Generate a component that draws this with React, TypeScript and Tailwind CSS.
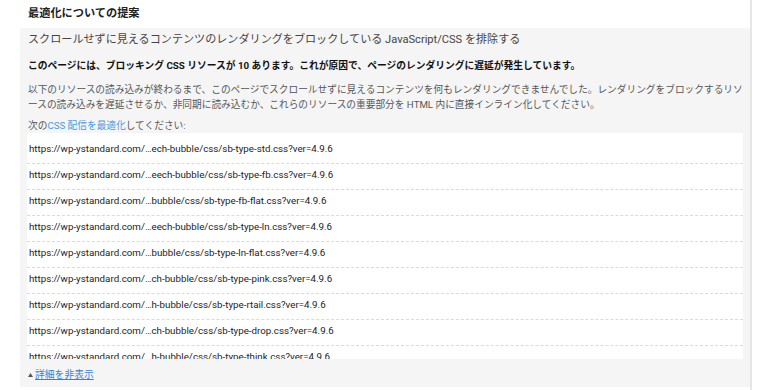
const resources = [
  "https://wp-ystandard.com/…ech-bubble/css/sb-type-std.css?ver=4.9.6",
  "https://wp-ystandard.com/…eech-bubble/css/sb-type-fb.css?ver=4.9.6",
  "https://wp-ystandard.com/…bubble/css/sb-type-fb-flat.css?ver=4.9.6",
  "https://wp-ystandard.com/…eech-bubble/css/sb-type-ln.css?ver=4.9.6",
  "https://wp-ystandard.com/…bubble/css/sb-type-ln-flat.css?ver=4.9.6",
  "https://wp-ystandard.com/…ch-bubble/css/sb-type-pink.css?ver=4.9.6",
  "https://wp-ystandard.com/…h-bubble/css/sb-type-rtail.css?ver=4.9.6",
  "https://wp-ystandard.com/…ch-bubble/css/sb-type-drop.css?ver=4.9.6",
  "https://wp-ystandard.com/…h-bubble/css/sb-type-think.css?ver=4.9.6",
];

const App = () => {
  return (
    <div className="flex h-[390px] w-[768px] overflow-hidden bg-white font-['Roboto','Noto_Sans_CJK_JP',sans-serif]">
      <div className="w-[750px] shrink-0 pl-[20px]">
        <h3 className="flex h-[28px] items-center pl-[8px] text-[11.2px] font-bold text-[#212121]">
          最適化についての提案
        </h3>

        <div className="flex h-[359px] flex-col bg-[#f5f5f5] pl-[8px] pr-[7px] pt-[4px]">
          <p className="text-[11.1px] leading-[16px] text-[#444]">
            スクロールせずに見えるコンテンツのレンダリングをブロックしている JavaScript/CSS を排除する
          </p>

          <p className="mt-[11px] text-[9.75px] font-bold leading-[14px] text-[#111]">
            このページには、ブロッキング CSS リソースが 10 あります。これが原因で、ページのレンダリングに遅延が発生しています。
          </p>

          <p className="mt-[9px] text-[9.7px] leading-[15px] text-[#555]">
            以下のリソースの読み込みが終わるまで、このページでスクロールせずに見えるコンテンツを何もレンダリングできませんでした。レンダリングをブロックするリソースの読み込みを遅延させるか、非同期に読み込むか、これらのリソースの重要部分を
            HTML 内に直接インライン化してください。
          </p>

          <p className="mt-[7px] text-[9.7px] leading-[14px] text-[#555]">
            次の
            <a href="#" className="text-[#4a9be3]">
              CSS 配信を最適化
            </a>
            してください:
          </p>

          <div className="-ml-[1px] h-[226px] overflow-hidden bg-white pt-[5px]">
            {resources.map((url) => (
              <div
                key={url}
                className="border-b border-dashed border-[#dadada] pb-[7px] pl-[2px] pt-[4px] text-[9.75px] leading-[14px] text-[#222]"
              >
                {url}
              </div>
            ))}
          </div>

          <div className="mt-[9px] flex items-center gap-[2px] text-[9.8px] leading-[14px]">
            <svg width="5" height="4" viewBox="0 0 5 4" className="text-[#555]">
              <path d="M2.5 0L5 4H0z" fill="currentColor" />
            </svg>
            <a href="#" className="text-[#3b7fd4] underline">
              詳細を非表示
            </a>
          </div>
        </div>
      </div>
      <div className="h-full w-[2px] shrink-0 bg-[#e6e6e6]" />
      <div className="flex-1" />
    </div>
  );
};

export default App;
